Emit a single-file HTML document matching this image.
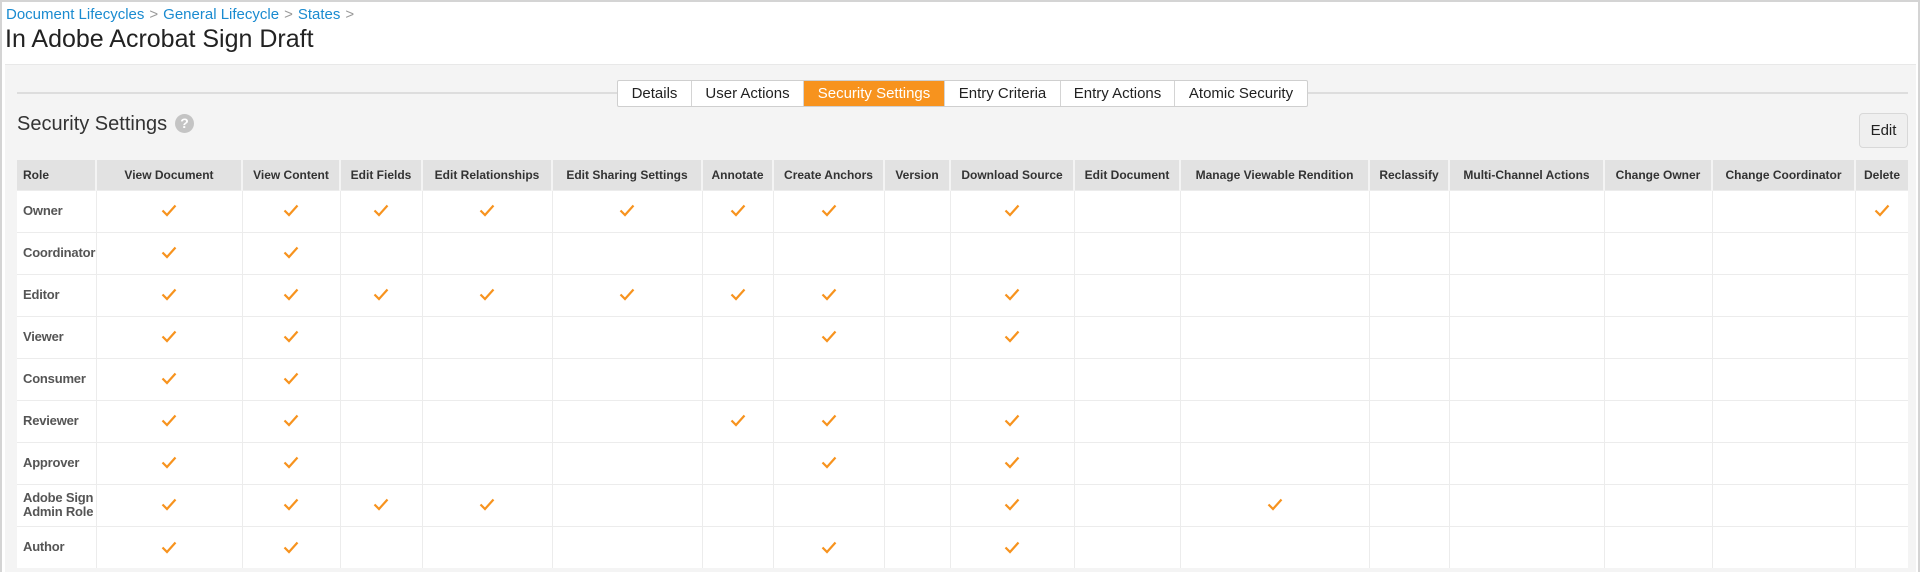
<!DOCTYPE html>
<html><head><meta charset="utf-8"><style>
*{box-sizing:border-box;margin:0;padding:0}
body{width:1920px;height:572px;overflow:hidden;background:#fff;font-family:"Liberation Sans",Arial,sans-serif;position:relative}
.frame{position:absolute;left:0;top:0;width:1920px;height:572px;border:2px solid #d4d4d4;border-bottom:none}
.bc{position:absolute;left:6px;top:6px;font-size:15px;color:#1a8bd0}
.bc span{color:#999;margin:0 5px}
.title{position:absolute;left:5px;top:25px;font-size:25px;color:#222}
.panel{position:absolute;left:5px;top:64px;width:1911px;height:508px;background:#f4f4f4;border-top:1px solid #e8e8e8}
.hr{position:absolute;left:17px;top:92px;width:1891px;height:2px;background:#ddd}
.tabs{position:absolute;left:617px;top:80px;height:27px;display:flex;border:1px solid #cfcfcf;border-radius:2px;background:#fff}
.tabs div{font-size:15px;color:#222;padding:0;line-height:25px;text-align:center;border-right:1px solid #d4d4d4}
.tabs div:last-child{border-right:none}
.tabs .on{background:#f7931e;color:#fff}
.h2{position:absolute;left:17px;top:113px;font-size:20px;color:#333}
.q{display:inline-block;width:19px;height:19px;border-radius:50%;background:#c4c4c4;color:#fff;font-size:14px;font-weight:bold;text-align:center;line-height:19px;vertical-align:2px;margin-left:8px}
.edit{position:absolute;left:1859px;top:113px;width:49px;height:35px;border:1px solid #d8d8d8;border-radius:4px;background:#efefef;font-size:15px;color:#222;text-align:center;line-height:33px}
table{position:absolute;left:17px;top:160px;border-collapse:collapse;table-layout:fixed;width:1891px}
th{background:#e2e2e2;height:30px;font-size:12px;color:#333;font-weight:bold;text-align:center;border-left:2px solid #f4f4f4;white-space:nowrap;overflow:hidden}
th:first-child{text-align:left;padding-left:6px;border-left:none}
td{background:#fff;height:42px;border-left:1px solid #ececec;border-top:1px solid #ececec;text-align:center;vertical-align:middle;padding:0}
td:first-child{text-align:left;padding-left:6px;font-size:13px;font-weight:bold;color:#555;border-left:none;line-height:14px;white-space:nowrap;letter-spacing:-0.2px}
td svg{display:inline-block;vertical-align:middle}
</style></head><body>
<div class="frame"></div>
<div class="bc">Document Lifecycles<span>&gt;</span>General Lifecycle<span>&gt;</span>States<span>&gt;</span></div>
<div class="title">In Adobe Acrobat Sign Draft</div>
<div class="panel"></div>
<div class="hr"></div>
<div class="tabs">
<div style="width:74px">Details</div><div style="width:112px">User Actions</div><div class="on" style="width:141px">Security Settings</div><div style="width:116px">Entry Criteria</div><div style="width:114px">Entry Actions</div><div style="width:132px">Atomic Security</div>
</div>
<div class="h2">Security Settings<span class="q">?</span></div>
<div class="edit">Edit</div>
<table id="t">
<colgroup>
<col style="width:79px"><col style="width:146px"><col style="width:98px"><col style="width:82px"><col style="width:130px"><col style="width:150px"><col style="width:71px"><col style="width:111px"><col style="width:66px"><col style="width:124px"><col style="width:106px"><col style="width:189px"><col style="width:80px"><col style="width:155px"><col style="width:108px"><col style="width:143px"><col style="width:53px">
</colgroup>
<tr><th>Role</th><th>View Document</th><th>View Content</th><th>Edit Fields</th><th>Edit Relationships</th><th>Edit Sharing Settings</th><th>Annotate</th><th>Create Anchors</th><th>Version</th><th>Download Source</th><th>Edit Document</th><th>Manage Viewable Rendition</th><th>Reclassify</th><th>Multi-Channel Actions</th><th>Change Owner</th><th>Change Coordinator</th><th>Delete</th></tr>
</table>
<script>
var C='<svg width="16" height="13" viewBox="0 0 16 13"><polyline points="1.5,6.5 6,11 14.5,1.5" fill="none" stroke="#f7931e" stroke-width="2.2"/></svg>';
var rows=[["Owner",[1,2,3,4,5,6,7,9,16]],["Coordinator",[1,2]],["Editor",[1,2,3,4,5,6,7,9]],["Viewer",[1,2,7,9]],["Consumer",[1,2]],["Reviewer",[1,2,6,7,9]],["Approver",[1,2,7,9]],["Adobe Sign<br>Admin Role",[1,2,3,4,9,11]],["Author",[1,2,7,9]]];
var t=document.getElementById('t'),h='';
rows.forEach(function(r){h+='<tr><td>'+r[0]+'</td>';for(var i=1;i<17;i++)h+='<td>'+(r[1].indexOf(i)>=0?C:'')+'</td>';h+='</tr>';});
t.insertAdjacentHTML('beforeend',h);
</script>
</body></html>
